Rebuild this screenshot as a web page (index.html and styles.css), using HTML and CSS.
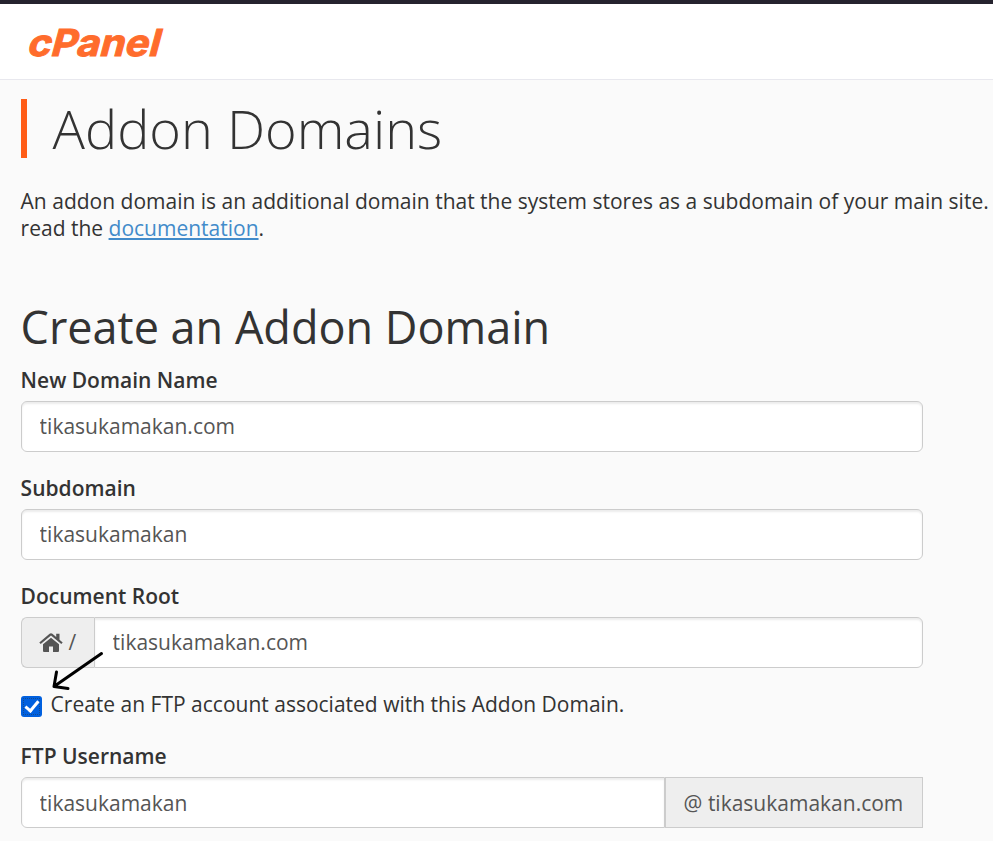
FILE: index.html
```html
<!DOCTYPE html>
<html lang="en">
<head>
    <meta charset="UTF-8">
    <meta name="viewport" content="width=device-width, initial-scale=1.0">
    <title>cPanel - Addon Domains</title>
    <link rel="stylesheet" href="styles.css">
</head>
<body>
    <header class="masthead">
        <svg class="logo" width="150" height="48" viewBox="0 0 150 48" role="img" aria-label="cPanel">
            <text transform="translate(0 31.500) skewX(-15)" textLength="132" lengthAdjust="spacingAndGlyphs">cPanel</text>
        </svg>
    </header>

    <main class="content">
        <h1>Addon Domains</h1>
        <p class="description">An addon domain is an additional domain that the system stores as a subdomain of your main site.<br>read the <a href="#">documentation</a>.</p>

        <h2>Create an Addon Domain</h2>
        <form class="domain-form">
            <div class="form-group">
                <label for="domain">New Domain Name</label>
                <input type="text" id="domain" class="form-control" value="tikasukamakan.com">
            </div>

            <div class="form-group">
                <label for="subdomain">Subdomain</label>
                <input type="text" id="subdomain" class="form-control" value="tikasukamakan">
            </div>

            <div class="form-group root-group">
                <label for="dir">Document Root</label>
                <div class="input-group">
                    <span class="addon addon-left">
                        <svg class="home" width="24" height="20" viewBox="0 0 24 20">
                            <path d="M12 4.800 4 11.300V18q0 1 1 1h5v-5.500h4V19h5q1 0 1-1v-6.700z"/>
                            <path d="M12 .3q-.8 0-1.400.5L.3 9.400l1.400 1.700L12 2.600l10.300 8.500 1.400-1.700L20.500 6.700V.8h-3.300v3.100L13.400.8Q12.800.3 12 .3z"/>
                        </svg>
                        <span>/</span>
                    </span>
                    <input type="text" id="dir" class="form-control" value="tikasukamakan.com">
                </div>
                <svg class="arrow" width="54" height="40" viewBox="0 0 54 40">
                    <path d="M50.500 2.500 3 35.500M5.500 21 3 35.500l14 2"/>
                </svg>
            </div>

            <div class="checkbox">
                <input type="checkbox" id="ftp" checked>
                <label for="ftp">Create an FTP account associated with this Addon Domain.</label>
            </div>

            <div class="form-group">
                <label for="ftpuser">FTP Username</label>
                <div class="input-group">
                    <input type="text" id="ftpuser" class="form-control" value="tikasukamakan">
                    <span class="addon addon-right">@ tikasukamakan.com</span>
                </div>
            </div>
        </form>
    </main>
</body>
</html>
```
FILE: styles.css
```css
* {
    box-sizing: border-box;
}

body {
    margin: 0;
    height: 841px;
    overflow: hidden;
    background-color: #fafafa;
    color: #333;
    font-family: "Open Sans", "Noto Sans", sans-serif;
    font-size: 21px;
    line-height: 27px;
}

.masthead {
    height: 80px;
    padding: 20px 26px 0;
    background-color: #fff;
    border-top: 4px solid #25232e;
    border-bottom: 1px solid #e8e8ee;
}

.logo {
    display: block;
    overflow: visible;
    fill: #ff6c2c;
    stroke: #ff6c2c;
    stroke-width: 1px;
    font-family: Inter, "Liberation Sans", sans-serif;
    font-size: 37px;
    font-weight: 700;
}

.content {
    padding: 19px 0 0 20.6px;
}

h1 {
    height: 59px;
    margin: 0 0 30px;
    padding-left: 26px;
    border-left: 6px solid #ff5c16;
    font-size: 54px;
    font-weight: 300;
    line-height: 58px;
}

.description {
    margin: 0 0 57px;
    white-space: nowrap;
}

.description a {
    color: #428bca;
}

h2 {
    margin: 0 0 12px;
    font-size: 45px;
    font-weight: 400;
    line-height: 56px;
}

.domain-form {
    width: 902px;
}

.form-group {
    margin-bottom: 23px;
}

.form-group label {
    display: block;
    margin-bottom: 7px;
    font-weight: 600;
}

.form-control {
    display: block;
    width: 100%;
    height: 51px;
    padding: 0 18px 2px;
    border: 1px solid #ccc;
    border-radius: 6px;
    background-color: #fff;
    box-shadow: inset 0 2px 2px rgba(0, 0, 0, 0.075);
    color: #555;
    font: inherit;
}

.input-group {
    display: flex;
}

.input-group .form-control {
    flex: 1;
    min-width: 0;
}

.addon {
    display: flex;
    align-items: center;
    height: 51px;
    border: 1px solid #ccc;
    background-color: #eee;
    color: #555;
}

.addon-left {
    width: 73px;
    gap: 6px;
    padding-left: 17px;
    border-right: 0;
    border-radius: 6px 0 0 6px;
}

.addon-left + .form-control {
    border-radius: 0 6px 6px 0;
}

.addon-right {
    width: 258px;
    padding: 1px 0 0 18px;
}

.input-group .form-control:first-child {
    border-radius: 6px 0 0 6px;
    padding-bottom: 0;
}

.home {
    fill: #555;
}

.root-group {
    position: relative;
}

/* pointer from the document root down to the checkbox */
.arrow {
    position: absolute;
    top: 68px;
    left: 30px;
    fill: none;
    stroke: #000;
    stroke-width: 3px;
    stroke-linecap: round;
    stroke-linejoin: round;
}

.checkbox {
    display: flex;
    align-items: center;
    gap: 9px;
    margin-bottom: 25px;
}

.checkbox input {
    position: relative;
    top: 2px;
    appearance: none;
    width: 21px;
    height: 21px;
    margin: 0;
    border-radius: 3px;
    outline: 1px dotted #124a91;
    outline-offset: -3px;
    background-color: #0060df;
}

.checkbox input::after {
    content: "";
    box-sizing: border-box;
    position: absolute;
    top: 2px;
    left: 7px;
    width: 8px;
    height: 14px;
    border: solid #fff;
    border-width: 0 3px 3px 0;
    transform: rotate(40deg);
}
```
